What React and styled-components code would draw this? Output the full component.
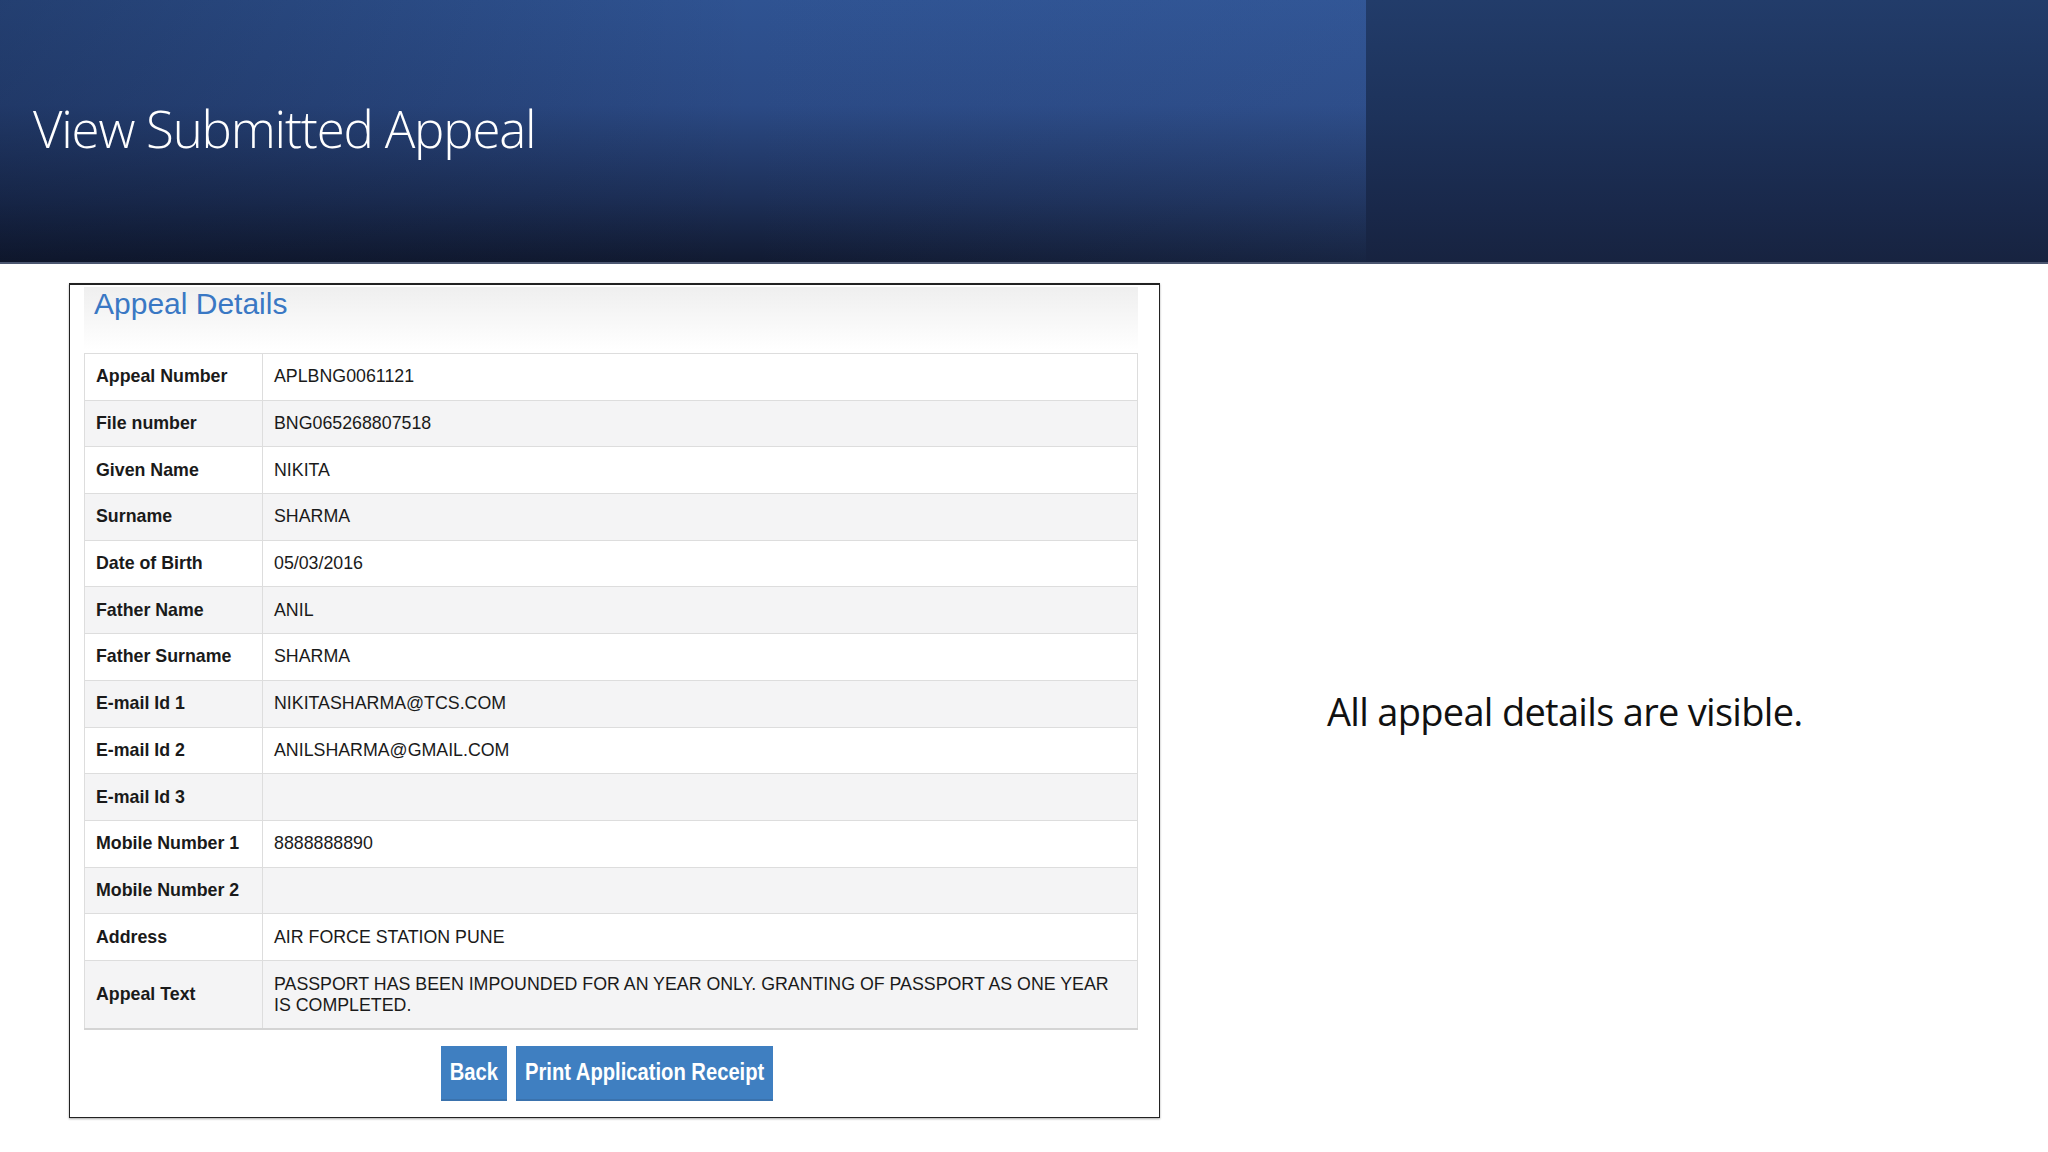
import styled, { createGlobalStyle } from 'styled-components'

const GlobalStyle = createGlobalStyle`
  html, body {
    margin: 0;
    padding: 0;
    background: #ffffff;
  }
  body {
    width: 2048px;
    height: 1152px;
    overflow: hidden;
    font-family: "Liberation Sans", Arial, sans-serif;
  }
`

const details = [
  ['Appeal Number', 'APLBNG0061121'],
  ['File number', 'BNG065268807518'],
  ['Given Name', 'NIKITA'],
  ['Surname', 'SHARMA'],
  ['Date of Birth', '05/03/2016'],
  ['Father Name', 'ANIL'],
  ['Father Surname', 'SHARMA'],
  ['E-mail Id 1', 'NIKITASHARMA@TCS.COM'],
  ['E-mail Id 2', 'ANILSHARMA@GMAIL.COM'],
  ['E-mail Id 3', ''],
  ['Mobile Number 1', '8888888890'],
  ['Mobile Number 2', ''],
  ['Address', 'AIR FORCE STATION PUNE'],
  [
    'Appeal Text',
    'PASSPORT HAS BEEN IMPOUNDED FOR AN YEAR ONLY. GRANTING OF PASSPORT AS ONE YEAR IS COMPLETED.',
  ],
]

const Slide = styled.div`
  width: 2048px;
  height: 1152px;
  display: flex;
  flex-direction: column;
`

const Banner = styled.header`
  height: 262px;
  display: flex;
  border-bottom: 2px solid #4b5670;
`

const BannerMain = styled.div`
  width: 1366px;
  display: flex;
  align-items: center;
  padding: 0 0 6px 33px;
  box-sizing: border-box;
  background:
    linear-gradient(90deg, rgba(6, 12, 28, 0.28) 0%, rgba(6, 12, 28, 0) 55%, rgba(70, 110, 180, 0.12) 100%),
    linear-gradient(180deg, #2f5392 0%, #2b4a85 40%, #1d3059 75%, #111a31 100%);
`

const BannerSide = styled.div`
  flex: 1;
  background: linear-gradient(180deg, #223c6a 0%, #1d325a 45%, #19284a 80%, #172340 100%);
`

const Title = styled.h1`
  margin: 0;
  color: #ffffff;
  font-family: "Open Sans", "Noto Sans", sans-serif;
  font-weight: 300;
  font-size: 51px;
  letter-spacing: -1.2px;
  line-height: 1;
`

const Body = styled.main`
  flex: 1;
  display: flex;
  align-items: flex-start;
  padding: 19px 0 0 69px;
`

const Card = styled.section`
  width: 1091px;
  height: 835px;
  box-sizing: border-box;
  border: 1px solid #222;
  border-top: 2px solid #222;
  box-shadow: 0 1px 2px rgba(0, 0, 0, 0.35);
  padding: 2px 21px 0 14px;
  display: flex;
  flex-direction: column;
`

const CardHeading = styled.div`
  height: 63px;
  padding: 0 10px;
  background: linear-gradient(180deg, #efefef 0%, #f7f7f7 50%, #ffffff 100%);
`

const HeadingText = styled.h2`
  margin: 0;
  font-family: "Liberation Sans", Arial, sans-serif;
  font-weight: 400;
  font-size: 30px;
  line-height: 34px;
  color: #3a78c4;
`

const Table = styled.table`
  margin-top: 3px;
  width: 100%;
  border-collapse: collapse;
  font-family: "Liberation Sans", Arial, sans-serif;
  font-size: 17.8px;
  color: #1a1a1a;
  border-bottom: 2px solid #d4d4d4;
`

const Row = styled.tr`
  background: ${(p) => (p.$shaded ? '#f4f4f5' : '#ffffff')};
`

const Cell = styled.td`
  height: ${(p) => (p.$tall ? '69px' : '46.7px')};
  box-sizing: border-box;
  padding: 0 ${(p) => (p.$label ? '11px' : '8px')} 0 11px;
  border: 1px solid #dddddd;
  vertical-align: middle;
  line-height: 21px;
  font-weight: ${(p) => (p.$label ? 700 : 400)};
  width: ${(p) => (p.$label ? '178px' : 'auto')};
`

const Actions = styled.div`
  display: flex;
  justify-content: center;
  gap: 9px;
  margin-top: 16px;
  padding-right: 8px;
`

const Button = styled.button`
  height: 55px;
  padding: 0 9px;
  border: none;
  border-bottom: 2px solid #3a72ad;
  background: #3f7fc1;
  color: #ffffff;
  font-family: "Liberation Sans", Arial, sans-serif;
  font-weight: 700;
  font-size: 20.2px;
  cursor: pointer;
`

const ButtonLabel = styled.span`
  display: inline-block;
  transform: scaleY(1.18);
`

const Caption = styled.p`
  margin: 406px 0 0 167px;
  font-family: "Open Sans", "Noto Sans", sans-serif;
  font-size: 38px;
  letter-spacing: -0.7px;
  line-height: 1.2;
  color: #111111;
`

export default function App() {
  return (
    <>
      <GlobalStyle />
      <Slide>
        <Banner>
          <BannerMain>
            <Title>View Submitted Appeal</Title>
          </BannerMain>
          <BannerSide />
        </Banner>
        <Body>
          <Card>
            <CardHeading>
              <HeadingText>Appeal Details</HeadingText>
            </CardHeading>
            <Table>
              <tbody>
                {details.map(([label, value], i) => {
                  const tall = label === 'Appeal Text'
                  return (
                    <Row key={label} $shaded={i % 2 === 1}>
                      <Cell $label $tall={tall}>{label}</Cell>
                      <Cell $tall={tall}>{value}</Cell>
                    </Row>
                  )
                })}
              </tbody>
            </Table>
            <Actions>
              <Button>
                <ButtonLabel>Back</ButtonLabel>
              </Button>
              <Button>
                <ButtonLabel>Print Application Receipt</ButtonLabel>
              </Button>
            </Actions>
          </Card>
          <Caption>All appeal details are visible.</Caption>
        </Body>
      </Slide>
    </>
  )
}
